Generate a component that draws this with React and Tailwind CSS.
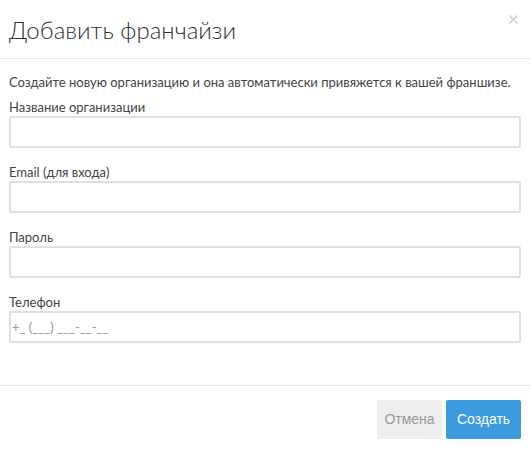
import React from "react";

function Field({ label, placeholder }) {
  return (
    <div className="mb-[15px]">
      <div className="text-[13px] leading-[18px] text-[#444]">{label}</div>
      <div className="h-[32px] border-2 border-[#e0e0e0] rounded-[2px] flex items-center pl-[1px]">
        {placeholder ? (
          <span className="text-[13px] text-[#999] leading-none">{placeholder}</span>
        ) : null}
      </div>
    </div>
  );
}

export default function App() {
  return (
    <div className="w-[531px] h-[452px] bg-white font-['Lato',sans-serif] overflow-hidden">
      <div className="h-[59px] border-b border-[#e5e5e5] flex justify-between items-start pl-[9px] pr-[13px]">
        <h1 className="text-[24px] font-light leading-[34px] text-[#333] mt-[13px]">
          Добавить франчайзи
        </h1>
        <svg width="9" height="9" viewBox="0 0 9 9" className="mt-[15px]">
          <path d="M0.5 0.5 L8.5 8.5 M8.5 0.5 L0.5 8.5" stroke="#c8c8c8" strokeWidth="1.2" />
        </svg>
      </div>
      <div className="pl-[9px] pr-[10px] pt-[14px] h-[326px]">
        <p className="text-[13px] leading-[18px] text-[#444] mb-[7px] whitespace-nowrap">
          Создайте новую организацию и она автоматически привяжется к вашей франшизе.
        </p>
        <Field label="Название организации" />
        <Field label="Email (для входа)" />
        <Field label="Пароль" />
        <Field label="Телефон" placeholder="+_ (___) ___-__-__" />
      </div>
      <div className="border-t border-[#e5e5e5] flex justify-end gap-[4px] pr-[10px] pt-[14px] font-['Liberation_Sans',sans-serif]">
        <button className="w-[65px] h-[39px] bg-[#eeeeee] text-[#999] text-[14px] rounded-[2px]">
          Отмена
        </button>
        <button className="w-[75px] h-[39px] bg-[#3c9ade] text-white text-[14px] rounded-[2px]">
          Создать
        </button>
      </div>
    </div>
  );
}
